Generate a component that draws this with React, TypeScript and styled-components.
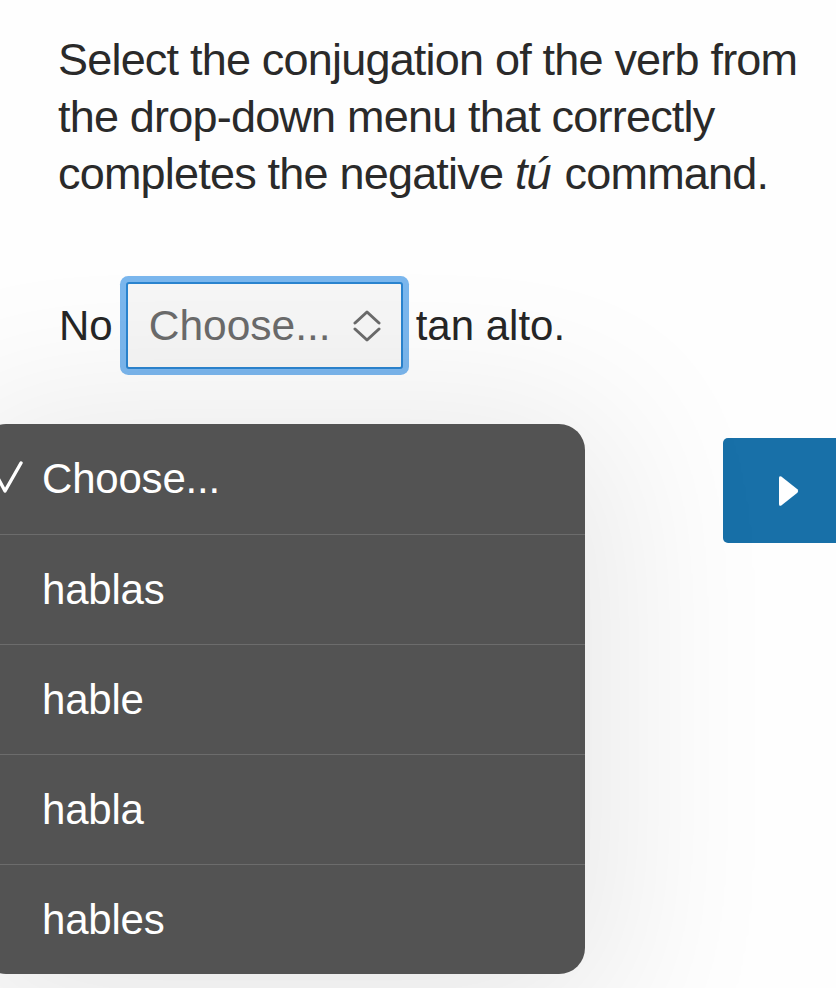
import React from 'react';
import styled, { createGlobalStyle } from 'styled-components';

const GlobalStyle = createGlobalStyle`
	html, body {
		margin: 0;
		padding: 0;
		background: #ffffff;
	}
	* {
		box-sizing: border-box;
	}
`;

const options = ['Choose...', 'hablas', 'hable', 'habla', 'hables'];

const Page = styled.div`
	position: relative;
	width: 836px;
	height: 988px;
	overflow: hidden;
	padding-top: 31px;
	background: #fefefe;
	font-family: 'Liberation Sans', Arial, sans-serif;
	color: #2a2a2a;
`;

const Prompt = styled.p`
	margin: 0;
	padding-left: 58px;
	padding-right: 20px;
	font-size: 45px;
	line-height: 57px;
	letter-spacing: -0.8px;

	em {
		font-style: italic;
		padding-right: 2px;
	}
`;

const Sentence = styled.div`
	display: flex;
	align-items: center;
	gap: 13px;
	margin-top: 80px;
	padding-left: 59px;
`;

const Word = styled.span`
	font-size: 42px;
	color: #262626;
`;

const SelectBox = styled.div`
	display: flex;
	align-items: center;
	justify-content: space-between;
	width: 277px;
	height: 87px;
	padding: 0 20px 0 21px;
	border: 2px solid #2a84cf;
	border-radius: 3px;
	background: #f6f6f6;
	box-shadow: 0 0 0 6px #7bb7ee;
	font-size: 42.5px;
	color: #6b6b6b;
`;

const ButtonRow = styled.div`
	display: flex;
	justify-content: flex-end;
	margin-top: 69px;
	margin-right: -17px;
`;

const NextButton = styled.button`
	display: flex;
	align-items: center;
	justify-content: center;
	width: 130px;
	height: 105px;
	padding: 0;
	border: none;
	border-radius: 5px;
	background: #1870a8;
	cursor: pointer;
`;

const Menu = styled.ul`
	position: absolute;
	left: -20px;
	top: 424px;
	width: 605px;
	margin: 0;
	padding: 0;
	list-style: none;
	background: #535353;
	border-radius: 26px;
	overflow: hidden;
	box-shadow: 0 20px 170px 30px rgba(0, 0, 0, 0.09);
`;

const MenuItem = styled.li<{ $first?: boolean }>`
	display: flex;
	align-items: center;
	height: 110px;
	padding-left: 13px;
	border-top: ${(p) => (p.$first ? 'none' : '1px solid #6c6c6c')};
	font-size: 42px;
	letter-spacing: -0.2px;
	color: #ffffff;
`;

const CheckSlot = styled.span`
	display: flex;
	align-items: center;
	width: 30px;
	height: 34px;
	margin-right: 19px;
	margin-top: -4px;
`;

const UpDownIcon = () => (
	<svg width='28' height='34' viewBox='0 0 28 34' fill='none'>
		<polyline
			points='2,14 14,3 26,14'
			stroke='#6b6b6b'
			strokeWidth='3'
			strokeLinecap='round'
			strokeLinejoin='round'
		/>
		<polyline
			points='2,20 14,31 26,20'
			stroke='#6b6b6b'
			strokeWidth='3'
			strokeLinecap='round'
			strokeLinejoin='round'
		/>
	</svg>
);

const PlayIcon = () => (
	<svg width='24' height='34' viewBox='0 0 24 34'>
		<path
			d='M3 4 Q3 1.2 5.3 2.6 L21.4 15.2 Q23 17 21.4 18.8 L5.3 31.4 Q3 32.8 3 30 Z'
			fill='#ffffff'
		/>
	</svg>
);

const CheckIcon = () => (
	<svg width='30' height='34' viewBox='0 0 30 34' fill='none'>
		<polyline
			points='5,18 12,31 28,3'
			stroke='#ffffff'
			strokeWidth='3.4'
			strokeLinecap='round'
			strokeLinejoin='round'
		/>
	</svg>
);

const App = () => {
	return (
		<Page>
			<GlobalStyle />
			<Prompt>
				Select the conjugation of the verb from the drop-down menu that
				correctly completes the negative <em>tú</em> command.
			</Prompt>
			<Sentence>
				<Word>No</Word>
				<SelectBox>
					<span>Choose...</span>
					<UpDownIcon />
				</SelectBox>
				<Word>tan alto.</Word>
			</Sentence>
			<ButtonRow>
				<NextButton aria-label='next'>
					<PlayIcon />
				</NextButton>
			</ButtonRow>
			<Menu>
				{options.map((opt, i) => (
					<MenuItem key={opt} $first={i === 0}>
						<CheckSlot>{i === 0 && <CheckIcon />}</CheckSlot>
						{opt}
					</MenuItem>
				))}
			</Menu>
		</Page>
	);
};

export default App;
